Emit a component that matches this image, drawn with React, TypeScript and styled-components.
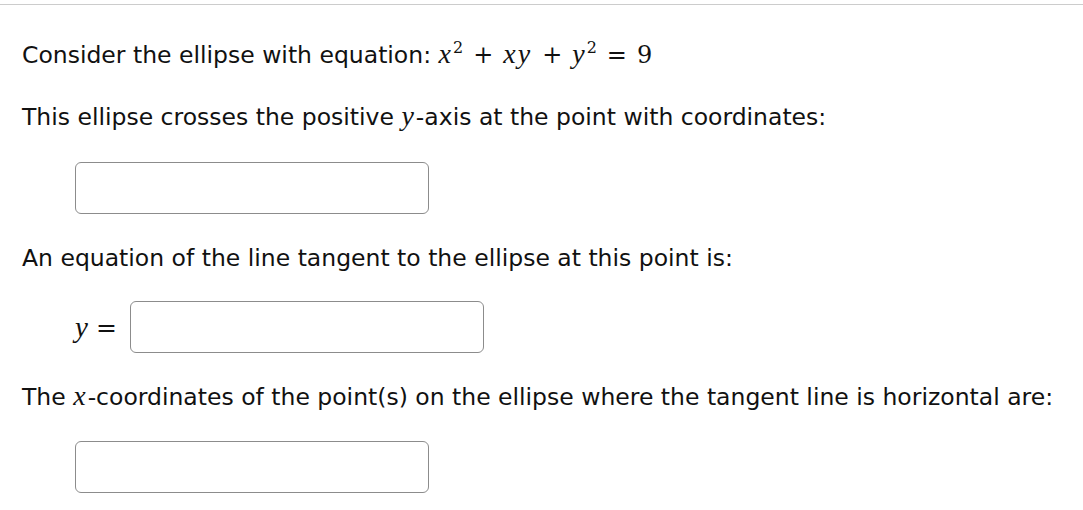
import React from "react";
import styled, { createGlobalStyle } from "styled-components";

const Global = createGlobalStyle`
  html, body { margin: 0; padding: 0; background: #ffffff; }
  body { font-family: "DejaVu Sans", "Liberation Sans", sans-serif; color: #111; }
`;

const Page = styled.div`
  border-top: 1px solid #cccccc;
  margin-top: 4px;
  padding: 38px 0 0 22px;
  display: flex;
  flex-direction: column;
`;

const Text = styled.p<{ $gap: number }>`
  margin: 0 0 ${(p) => p.$gap}px 0;
  font-size: 23.5px;
  line-height: 24px;
  height: 24px;
  white-space: nowrap;
`;

const M = styled.span<{ $up?: boolean }>`
  font-family: ${(p) => (p.$up ? '"DejaVu Serif", serif' : '"Liberation Serif", serif')};
  font-style: ${(p) => (p.$up ? "normal" : "italic")};
  font-size: ${(p) => (p.$up ? "24px" : "28px")};
  letter-spacing: ${(p) => (p.$up ? "0" : "2px")};
  line-height: 0;
`;

const Sup = styled.sup`
  font-family: "DejaVu Serif", serif;
  font-style: normal;
  font-size: 16px;
  vertical-align: 10px;
  line-height: 0;
`;

const Op = styled.span`
  font-family: "DejaVu Serif", serif;
  font-size: 24px;
  line-height: 0;
  padding: 0 10px;
`;

const Row = styled.div<{ $gap: number }>`
  display: flex;
  align-items: center;
  margin: 0 0 ${(p) => p.$gap}px 53px;
  gap: 10px;
`;

const Box = styled.input`
  width: 354px;
  height: 52px;
  box-sizing: border-box;
  border: 1px solid #8c8c8c;
  border-radius: 6px;
  background: #fff;
  outline: none;
`;

const Label = styled.span`
  width: 45px;
  display: flex;
  align-items: center;
  gap: 8px;
  font-family: "DejaVu Serif", serif;
  font-size: 25px;
  i {
    font-family: "Liberation Serif", serif;
    font-size: 29px;
  }
`;

export default function App() {
  return (
    <>
      <Global />
      <Page>
        <Text $gap={38}>
          Consider the ellipse with equation: <M>x</M>
          <Sup>2</Sup>
          <Op>+</Op>
          <M>xy</M>
          <Op>+</Op>
          <M>y</M>
          <Sup>2</Sup>
          <Op>=</Op>
          <M $up>9</M>
        </Text>
        <Text $gap={33}>
          This ellipse crosses the positive <M>y</M>-axis at the point with coordinates:
        </Text>
        <Row $gap={32}>
          <Box />
        </Row>
        <Text $gap={31}>An equation of the line tangent to the ellipse at this point is:</Text>
        <Row $gap={32}>
          <Label>
            <i>y</i>=
          </Label>
          <Box />
        </Row>
        <Text $gap={32}>
          The <M>x</M>-coordinates of the point(s) on the ellipse where the tangent line is horizontal are:
        </Text>
        <Row $gap={0}>
          <Box />
        </Row>
      </Page>
    </>
  );
}
